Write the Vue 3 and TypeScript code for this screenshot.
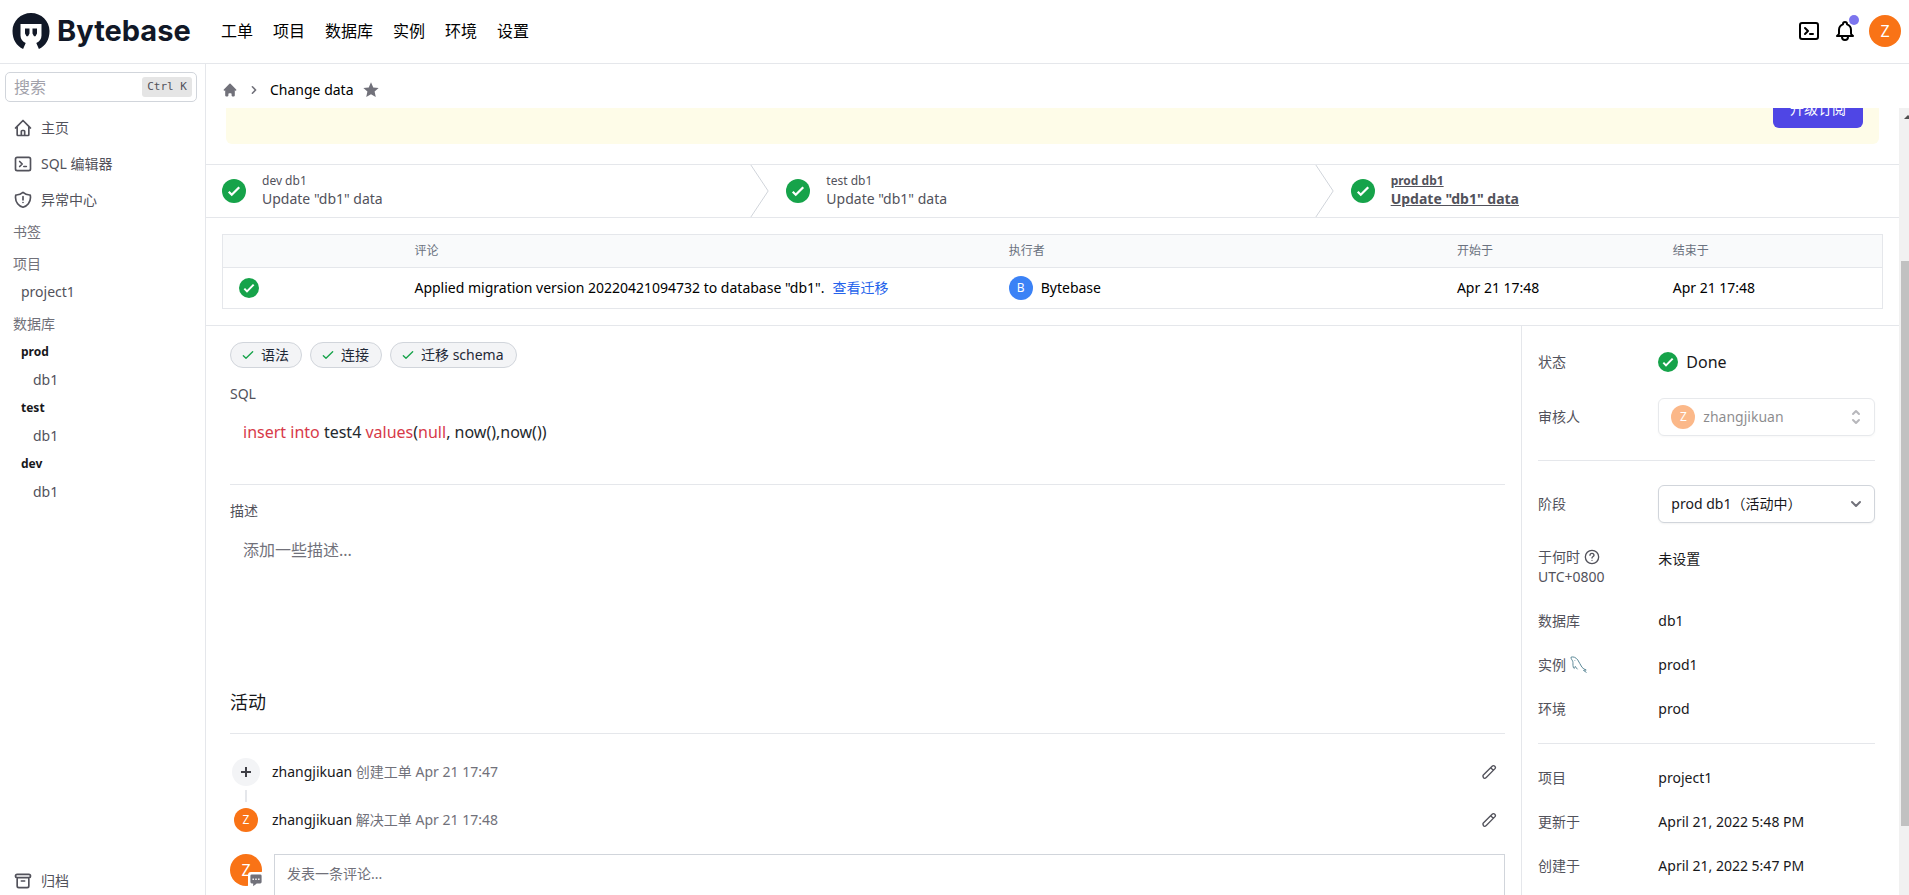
<script setup lang="ts">
import { ref } from 'vue'

interface Stage { name: string; task: string; active: boolean }
interface Activity { kind: 'create' | 'user'; actor: string; action: string; time: string }
interface Environment { name: string; databases: string[] }

const nav: string[] = ['工单', '项目', '数据库', '实例', '环境', '设置']
const environments: Environment[] = [
  { name: 'prod', databases: ['db1'] },
  { name: 'test', databases: ['db1'] },
  { name: 'dev', databases: ['db1'] },
]
const stages: Stage[] = [
  { name: 'dev db1', task: 'Update "db1" data', active: false },
  { name: 'test db1', task: 'Update "db1" data', active: false },
  { name: 'prod db1', task: 'Update "db1" data', active: true },
]
const activities: Activity[] = [
  { kind: 'create', actor: 'zhangjikuan', action: '创建工单', time: 'Apr 21 17:47' },
  { kind: 'user', actor: 'zhangjikuan', action: '解决工单', time: 'Apr 21 17:48' },
]
const search = ref('')
const description = ref('')
const comment = ref('')
const stage = ref('prod')

const icons = {
  home: 'M3 12l2-2m0 0l7-7 7 7M5 10v10a1 1 0 001 1h3m10-11l2 2m-2-2v10a1 1 0 01-1 1h-3m-6 0a1 1 0 001-1v-4a1 1 0 011-1h2a1 1 0 011 1v4a1 1 0 001 1m-6 0h6',
  terminal: 'M8 9l3 3-3 3m5 0h3M5 20h14a2 2 0 002-2V6a2 2 0 00-2-2H5a2 2 0 00-2 2v12a2 2 0 002 2z',
  shield: 'M20.618 5.984A11.955 11.955 0 0112 2.944a11.955 11.955 0 01-8.618 3.04A12.02 12.02 0 003 9c0 5.591 3.824 10.29 9 11.622 5.176-1.332 9-6.03 9-11.622 0-1.042-.133-2.052-.382-3.016zM12 8v4m0 3h.01',
  archive: 'M5 8h14M5 8a2 2 0 110-4h14a2 2 0 110 4M5 8v10a2 2 0 002 2h10a2 2 0 002-2V8m-9 4h4',
  bell: 'M15 17h5l-1.405-1.405A2.032 2.032 0 0118 14.158V11a6.002 6.002 0 00-4-5.659V5a2 2 0 10-4 0v.341C7.67 6.165 6 8.388 6 11v3.159c0 .538-.214 1.055-.595 1.436L4 17h5m6 0v1a3 3 0 11-6 0v-1m6 0H9',
  check: 'M5 13l4 4L19 7',
  pencil: 'M3.500 19.500a2.400 2.400 0 010-3L16.700 3.300a2.700 2.700 0 014 4L7.500 20.500a2.600 2.600 0 01-4 0zM14.500 5.500l4 4',
}
const mainLinks = [
  { label: '主页', icon: icons.home },
  { label: 'SQL 编辑器', icon: icons.terminal },
  { label: '异常中心', icon: icons.shield },
]
</script>

<template>
  <div class="app">
    <header class="topbar">
      <a class="brand" href="#">
        <svg class="mark" viewBox="0 0 38 36" aria-hidden="true">
          <path fill="#111827" d="M19 0C8.700 0 .5 8 .5 18c0 8.600 4 14.800 10.600 18l2.600-6C10.500 28.500 8.500 26 8.500 22.500V11h21v11.500c0 3.500-2 6-5.200 7.500l2.600 6c6.700-3.200 10.600-9.400 10.600-18C37.500 8 29.300 0 19 0z" />
          <path fill="#111827" d="M13 15.500h4.500v5l-1.500 2.700h-1.500L13 20.500zM20.500 15.500H25v5l-1.500 2.700H22l-1.500-2.700z" />
        </svg>
        <span class="wordmark">Bytebase</span>
      </a>
      <nav class="nav"><a v-for="n in nav" :key="n" href="#">{{ n }}</a></nav>
      <div class="tools">
        <button class="icon-btn" aria-label="SQL"><svg class="line i24" viewBox="0 0 24 24"><path :d="icons.terminal" /></svg></button>
        <button class="icon-btn bell" aria-label="通知"><svg class="line i24" viewBox="0 0 24 24"><path :d="icons.bell" /></svg><i class="dot"></i></button>
        <button class="avatar big" aria-label="账户">Z</button>
      </div>
    </header>

    <div class="body">
      <aside class="side">
        <label class="search">
          <input v-model="search" type="text" placeholder="搜索" aria-label="搜索" />
          <kbd>Ctrl K</kbd>
        </label>
        <nav class="links">
          <a v-for="l in mainLinks" :key="l.label" href="#">
            <svg class="line i20" viewBox="0 0 24 24"><path :d="l.icon" /></svg>{{ l.label }}
          </a>
        </nav>
        <h3>书签</h3>
        <h3>项目</h3>
        <a class="item" href="#">project1</a>
        <h3 class="db-title">数据库</h3>
        <template v-for="e in environments" :key="e.name">
          <a class="item env" href="#">{{ e.name }}</a>
          <a v-for="d in e.databases" :key="d" class="item sub" href="#">{{ d }}</a>
        </template>
        <a class="archive" href="#">
          <svg class="line i20" viewBox="0 0 24 24"><path :d="icons.archive" /></svg>归档
        </a>
      </aside>

      <main class="main">
        <div class="crumbs">
          <a href="#" aria-label="主页"><svg class="solid i16" viewBox="0 0 20 20"><path d="M10.707 2.293a1 1 0 00-1.414 0l-7 7a1 1 0 001.414 1.414L4 10.414V17a1 1 0 001 1h2a1 1 0 001-1v-2a1 1 0 011-1h2a1 1 0 011 1v2a1 1 0 001 1h2a1 1 0 001-1v-6.586l.293.293a1 1 0 001.414-1.414l-7-7z" /></svg></a>
          <svg class="solid i16" viewBox="0 0 20 20"><path d="M7.293 14.707a1 1 0 010-1.414L10.586 10 7.293 6.707a1 1 0 011.414-1.414l4 4a1 1 0 010 1.414l-4 4a1 1 0 01-1.414 0z" /></svg>
          <a class="crumb-name" href="#">Change data</a>
          <button class="icon-btn star" aria-label="收藏"><svg class="solid" viewBox="0 0 20 20"><path d="M10 1.500l2.500 5.600 6 .6-4.500 4.100 1.300 6-5.300-3.100-5.300 3.100 1.300-6-4.500-4.100 6-.6z" /></svg></button>
        </div>

        <div class="scroll">
          <div class="page">
            <div class="banner"><button>升级订阅</button></div>

            <ol class="stages">
              <li v-for="(s, i) in stages" :key="s.name" :class="{ active: s.active }">
                <span class="done d24"><svg viewBox="0 0 24 24"><path :d="icons.check" /></svg></span>
                <a href="#"><small>{{ s.name }}</small><span>{{ s.task }}</span></a>
                <svg v-if="i < 2" class="sep" viewBox="0 0 22 80" preserveAspectRatio="none"><path d="M0 -2L20 40L0 82" /></svg>
              </li>
            </ol>

            <section class="runs">
              <table>
                <colgroup><col class="c1" /><col class="c2" /><col class="c3" /><col class="c4" /><col /></colgroup>
                <thead><tr><th></th><th>评论</th><th>执行者</th><th>开始于</th><th>结束于</th></tr></thead>
                <tbody>
                  <tr>
                    <td><span class="done d20"><svg viewBox="0 0 24 24"><path :d="icons.check" /></svg></span></td>
                    <td><span class="line-text">Applied migration version 20220421094732 to database "db1".<a href="#">查看迁移</a></span></td>
                    <td><span class="who"><i class="avatar blue">B</i>Bytebase</span></td>
                    <td>Apr 21 17:48</td>
                    <td>Apr 21 17:48</td>
                  </tr>
                </tbody>
              </table>
            </section>

            <div class="columns">
              <div class="content">
                <div class="chips">
                  <button><svg class="line" viewBox="0 0 24 24"><path :d="icons.check" /></svg>语法</button>
                  <button><svg class="line" viewBox="0 0 24 24"><path :d="icons.check" /></svg>连接</button>
                  <button><svg class="line" viewBox="0 0 24 24"><path :d="icons.check" /></svg>迁移 schema</button>
                </div>
                <h4 class="sql-title">SQL</h4>
                <pre class="sql"><b>insert</b> <b>into</b> test4 <b>values</b>(<b>null</b>, now(),now())</pre>
                <label class="desc-title" for="desc">描述</label>
                <textarea id="desc" v-model="description" class="desc" placeholder="添加一些描述..."></textarea>
                <h2>活动</h2>
                <ul class="feed">
                  <li v-for="a in activities" :key="a.action">
                    <span class="node">
                      <i v-if="a.kind === 'create'" class="plus"><svg viewBox="0 0 20 20"><path d="M10 5v10M5 10h10" /></svg></i>
                      <i v-else class="avatar">Z</i>
                    </span>
                    <p><a href="#">{{ a.actor }}</a> {{ a.action }} {{ a.time }}</p>
                    <button class="icon-btn" aria-label="编辑"><svg class="line i16" viewBox="0 0 24 24"><path :d="icons.pencil" /></svg></button>
                  </li>
                </ul>
                <div class="reply">
                  <span class="me"><i class="avatar big">Z</i>
                    <span class="badge"><svg class="solid" viewBox="0 0 20 20"><path fill-rule="evenodd" d="M18 4v9a2 2 0 01-2 2h-5l-5 4v-4H4a2 2 0 01-2-2V4a2 2 0 012-2h12a2 2 0 012 2zM7 8H5v2h2V8zm2 0h2v2H9V8zm6 0h-2v2h2V8z" /></svg></span>
                  </span>
                  <textarea v-model="comment" aria-label="评论" placeholder="发表一条评论..."></textarea>
                </div>
              </div>

              <dl class="facts">
                <div class="row r-status"><dt>状态</dt><dd class="status"><span class="done d20"><svg viewBox="0 0 24 24"><path :d="icons.check" /></svg></span>Done</dd></div>
                <div class="row"><dt>审核人</dt><dd>
                  <button class="field person" disabled><i class="avatar">Z</i>zhangjikuan
                    <svg class="solid i20" viewBox="0 0 20 20"><path d="M10 3a1 1 0 01.707.293l3 3a1 1 0 01-1.414 1.414L10 5.414 7.707 7.707a1 1 0 01-1.414-1.414l3-3A1 1 0 0110 3zm-3.707 9.293a1 1 0 011.414 0L10 14.586l2.293-2.293a1 1 0 011.414 1.414l-3 3a1 1 0 01-1.414 0l-3-3a1 1 0 010-1.414z" /></svg>
                  </button></dd></div>
                <hr />
                <div class="row"><dt><label for="stage">阶段</label></dt><dd class="pick">
                  <select id="stage" v-model="stage" class="field"><option value="prod">prod db1（活动中）</option></select>
                  <svg class="line" viewBox="0 0 24 24"><path d="M6 9l6 6 6-6" /></svg></dd></div>
                <div class="row when"><dt><span class="ask">于何时<svg class="line i16" viewBox="0 0 24 24"><circle cx="12" cy="12" r="10" /><path d="M9 9.500a3 3 0 116 0c0 1.700-3 2-3 4M12 17h.01" /></svg></span>UTC+0800</dt><dd>未设置</dd></div>
                <div class="row"><dt>数据库</dt><dd>db1</dd></div>
                <div class="row"><dt class="ask">实例<svg class="mysql" viewBox="0 0 18 18"><path d="M1 1.200c2.300-.9 5 .3 6.800 2.800 1.700 2.300 2.400 4.900 4.200 7.300 1.100 1.400 2.600 2.100 4.200 2.700-1.200.1-2 .1-2.700.5.9.6 2 1.100 3 2M1 1.200c-.2 1.500 1 2.400 1.700 4 .6 1.600-.1 3.600.6 6 .3 1 .8 1.700 1.300 1 .3-.6.2-1.300.7-1.800.8 1 1.200 2 2.200 2.900M4.500 4l.4.6" /></svg></dt><dd>prod1</dd></div>
                <div class="row"><dt>环境</dt><dd>prod</dd></div>
                <hr />
                <div class="row"><dt>项目</dt><dd>project1</dd></div>
                <div class="row"><dt>更新于</dt><dd>April 21, 2022 5:48 PM</dd></div>
                <div class="row"><dt>创建于</dt><dd>April 21, 2022 5:47 PM</dd></div>
              </dl>
            </div>
          </div>
          <div class="track" aria-hidden="true"><svg viewBox="0 0 8 17"><path d="M3 11l4-4 4 4z" /></svg><i></i></div>
        </div>
      </main>
    </div>
  </div>
</template>

<style>
body { margin: 0; background: #fff; }
</style>

<style scoped>
* { box-sizing: border-box; }
.app { height: 100vh; overflow: hidden; display: flex; flex-direction: column; font-family: "Noto Sans", "Noto Sans CJK SC", sans-serif; font-size: 14px; line-height: 20px; color: #18181b; }
a { color: inherit; text-decoration: none; }
button, input, textarea, select { font: inherit; color: inherit; }
button { cursor: pointer; }
i { font-style: normal; }
h2, h3, h4, p, ol, ul, dl, dd, pre { margin: 0; padding: 0; }
svg { display: block; flex: none; }
.line { fill: none; stroke: currentColor; stroke-width: 2; stroke-linecap: round; stroke-linejoin: round; }
.solid { fill: currentColor; }
.i16 { width: 16px; height: 16px; }
.i20 { width: 20px; height: 20px; }
.i24 { width: 24px; height: 24px; }
.icon-btn { border: 0; background: none; padding: 0; position: relative; }

.topbar { flex: none; height: 64px; border-bottom: 1px solid #e5e7eb; display: flex; align-items: center; padding: 0 8px 2px 12px; }
.brand { display: flex; align-items: center; gap: 7px; width: 209px; color: #111827; }
.mark { width: 38px; height: 36px; }
.wordmark { font: 700 29px/36px Inter, sans-serif; }
.nav { display: flex; gap: 20px; font-size: 16px; flex: 1; color: #000; }
.tools { display: flex; align-items: center; gap: 12px; color: #000; }
.dot { position: absolute; top: -4px; right: -2px; width: 10px; height: 10px; border-radius: 50%; background: #7c75ee; }
.avatar { width: 24px; height: 24px; border-radius: 50%; background: #f97316; color: #fff; display: flex; align-items: center; justify-content: center; font-size: 12px; flex: none; border: 0; padding: 0; }
.avatar.big { width: 32px; height: 32px; font-size: 16px; }
.avatar.blue { background: #3b82f6; }

.body { flex: 1; min-height: 0; display: flex; }
.side { width: 206px; flex: none; border-right: 1px solid #e5e7eb; padding: 8px 8px 4px 5px; display: flex; flex-direction: column; color: #52525b; }
.search { height: 30px; border: 1px solid #d1d5db; border-radius: 5px; display: flex; align-items: center; padding: 0 4px 0 8px; }
.search input { flex: 1; min-width: 0; border: 0; outline: 0; padding: 0; background: none; font-size: 16px; }
.search input::placeholder { color: #a1a1aa; opacity: 1; }
kbd { height: 20px; padding: 0 5px; border-radius: 3px; background: #e5e5e5; font: 11px/20px "DejaVu Sans Mono", monospace; }
.links { margin-top: 8px; }
.links a, .archive { display: flex; align-items: center; gap: 8px; height: 36px; padding-left: 8px; }
h3 { font-size: 14px; font-weight: 400; line-height: 20px; padding: 4px 0 8px 8px; color: #71717a; }
.item { height: 28px; padding: 0 0 0 16px; }
.db-title { padding-top: 4px; }
.env { color: #18181b; font-weight: 700; font-size: 12px; }
.sub { padding-left: 28px; }
.archive { margin-top: auto; height: 20px; }

.main { flex: 1; min-width: 0; display: flex; flex-direction: column; }
.crumbs { height: 44px; display: flex; align-items: center; gap: 8px; padding: 8px 0 0 16px; color: #71717a; }
.crumb-name { color: #000; }
.star svg { width: 18px; height: 18px; }
.scroll { flex: 1; min-height: 0; display: flex; }
.page { flex: 1; min-width: 0; overflow: hidden; display: flex; flex-direction: column; }
.track { width: 10px; flex: none; background: #f1f1f1; display: flex; flex-direction: column; padding-left: 2px; overflow: hidden; }
.track::after { content: ""; flex: 69; }
.track svg { width: 8px; height: 17px; margin-bottom: 136px; fill: #505050; }
.track i { flex: 565; background: #c1c1c1; }
.banner { flex: none; height: 36px; margin: 0 20px; border-radius: 0 0 6px 6px; background: #fefce8; padding: 0 16px 16px; display: flex; align-items: flex-end; justify-content: flex-end; overflow: hidden; }
.banner button { flex: none; height: 38px; padding: 0 17px; border: 0; border-radius: 6px; background: #4f46e5; color: #fff; }

.stages { flex: none; display: flex; list-style: none; margin-top: 20px; height: 54px; border: 1px solid #e5e7eb; border-width: 1px 0; }
.stages li { flex: 1; display: flex; align-items: center; gap: 16px; padding-left: 16px; position: relative; color: #52525b; }
.stages a { display: flex; flex-direction: column; align-items: flex-start; line-height: 20px; }
.stages small { font-size: 12px; line-height: 16px; }
.active a { font-weight: 700; }
.active small, .active a span { text-decoration: underline; }
.sep { position: absolute; right: 0; top: 0; width: 20px; height: 100%; fill: none; stroke: #d1d5db; }
.sep path { vector-effect: non-scaling-stroke; }
.done { border-radius: 50%; background: #16a34a; display: flex; align-items: center; justify-content: center; flex: none; }
.done svg { fill: none; stroke: #fff; stroke-width: 3; }
.d24 { width: 24px; height: 24px; }
.d24 svg { width: 18px; height: 18px; }
.d20 { width: 20px; height: 20px; }
.d20 svg { width: 16px; height: 16px; }

.runs { padding: 16px 16px 16px; border-bottom: 1px solid #e5e7eb; }
table { width: 100%; table-layout: fixed; border-collapse: collapse; border: 1px solid #e5e7eb; color: #000; }
.c1 { width: 10.6%; } .c2 { width: 35.8%; } .c3 { width: 27%; } .c4 { width: 13%; }
th { height: 33px; padding: 0 16px; text-align: left; background: #f9fafb; font-size: 12px; font-weight: 400; color: #6b7280; border-bottom: 1px solid #e5e7eb; }
td { height: 41px; padding: 0 16px; }
.line-text { display: flex; gap: 8px; white-space: nowrap; }
.line-text a { color: #2563eb; }
.who { display: flex; align-items: center; gap: 8px; }

.columns { flex: 1; min-height: 0; display: flex; }
.content { flex: 1; min-width: 0; padding: 16px 16px 0 24px; display: flex; flex-direction: column; }
.chips { display: flex; gap: 8px; }
.chips button { height: 26px; border: 1px solid #d1d5db; border-radius: 13px; background: #f3f4f6; color: #1f2937; padding: 0 12px 0 9px; display: flex; align-items: center; }
.chips svg { width: 16px; height: 16px; margin-right: 5px; color: #16a34a; }
h4 { font-size: 14px; font-weight: 400; color: #52525b; margin-top: 16px; }
.sql { font: 16px/24px "Noto Sans", sans-serif; color: #24292e; padding: 16px 0 40px 13px; border-bottom: 1px solid #e5e7eb; }
.sql b { font-weight: 400; color: #d73a49; }
.desc-title { margin-top: 16px; color: #52525b; }
.desc { flex: none; margin-top: 9px; height: 136px; border: 0; resize: none; outline: 0; padding: 8px 13px; font-size: 16px; line-height: 24px; }
textarea::placeholder { color: #71717a; opacity: 1; }
h2 { font-size: 18px; font-weight: 400; line-height: 28px; margin-top: 22px; padding-bottom: 17px; border-bottom: 1px solid #e5e7eb; margin-bottom: 14px; }
.feed { list-style: none; }
.feed li { display: flex; align-items: center; height: 48px; color: #71717a; padding-right: 8px; position: relative; }
.feed li:first-child::after { content: ""; position: absolute; left: 15px; top: 42px; width: 2px; height: 12px; background: #e5e7eb; }
.feed p { flex: 1; }
.feed p a { color: #18181b; }
.feed .icon-btn { color: #52525b; }
.node { width: 32px; margin-right: 10px; display: flex; justify-content: center; }
.plus { width: 28px; height: 28px; border-radius: 50%; background: #f3f4f6; display: flex; align-items: center; justify-content: center; }
.plus svg { width: 20px; height: 20px; fill: none; stroke: #3f3f46; stroke-width: 2; }
.reply { flex: 1; min-height: 0; display: flex; gap: 12px; padding-top: 10px; }
.me { position: relative; width: 32px; }
.badge { position: absolute; left: 18px; top: 18px; width: 16px; height: 16px; background: #fff; border-radius: 3px 0 0 0; color: #71717a; display: flex; align-items: center; justify-content: center; }
.badge svg { width: 14px; height: 14px; }
.reply textarea { flex: 1; border: 1px solid #d1d5db; border-bottom: 0; padding: 9px 12px; resize: none; outline: 0; }

.facts { width: 378px; flex: none; border-left: 1px solid #e5e7eb; padding: 24px 24px 0 16px; display: flex; flex-direction: column; gap: 24px; }
.row { display: grid; grid-template-columns: repeat(3, 1fr); column-gap: 24px; align-items: center; min-height: 20px; }
.r-status { min-height: 24px; }
.when dd { align-self: start; line-height: 24px; }
dt { color: #52525b; white-space: nowrap; }
dd { grid-column: span 2; min-width: 0; position: relative; }
.status { display: flex; align-items: center; gap: 8px; font-size: 16px; }
.field { width: 100%; height: 38px; border: 1px solid #d1d5db; border-radius: 6px; background: #fff; padding: 0 12px; box-shadow: 0 1px 2px rgba(0, 0, 0, .05); appearance: none; display: flex; align-items: center; }
.person { opacity: .5; color: #18181b; gap: 8px; padding-right: 8px; }
.person svg { margin-left: auto; color: #71717a; }
.pick svg { position: absolute; right: 11px; top: 11px; width: 16px; height: 16px; color: #71717a; pointer-events: none; stroke-width: 3; }
.facts hr { width: 100%; height: 1px; margin: 0; border: 0; background: #e5e7eb; }
.ask { display: flex; align-items: center; gap: 4px; }
.mysql { width: 18px; height: 18px; fill: none; stroke: #5d8a99; stroke-width: 1; }
</style>
